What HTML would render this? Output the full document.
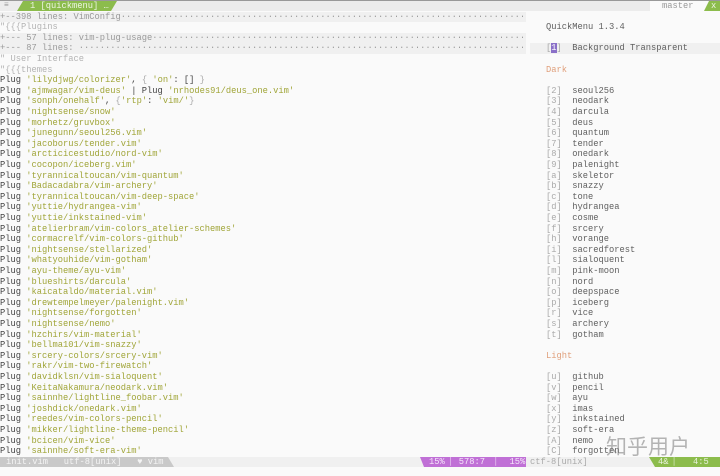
<!DOCTYPE html>
<html><head><meta charset="utf-8"><style>
*{margin:0;padding:0;box-sizing:border-box}
body{width:720px;height:476px;background:#fafafa;overflow:hidden;position:relative;font-family:"Liberation Mono",monospace;font-size:8.75px;color:#444}
.r{position:absolute;left:0;height:10.6px;line-height:10.6px;white-space:pre}
.m{margin-top:1px}
.s{color:#a0a538}.c{color:#b4b4b4}.p{color:#aaa}
.fold{background:#f0f0f0;color:#9a9a9a;width:526px;overflow:hidden}
.q{left:546px;color:#606060}
.q b{font-weight:normal;color:#aaa}
.h{color:#e0a07c}
</style></head><body>
<!-- tabline -->
<div style="position:absolute;left:0;top:0;width:720px;height:11px;background:#ececec;border-top:1px solid #999"></div>
<div style="position:absolute;left:4px;top:1px;font-size:8px;color:#999;line-height:10px">≡</div>
<div style="position:absolute;left:17px;top:1px;width:100px;height:10px;background:#8cbc4c;clip-path:polygon(6px 0,100% 0,94px 100%,0 100%)"></div>
<div class="r" style="left:30px;top:1px;color:#eef5e4">1 [quickmenu] …</div>
<div style="position:absolute;left:650px;top:1px;width:70px;height:10px;background:#fafafa"></div>
<div class="r" style="left:662px;top:1px;color:#999">master</div>
<div style="position:absolute;left:704px;top:1px;width:16px;height:10px;background:#8cbc4c;clip-path:polygon(5px 0,100% 0,100% 100%,0 100%)"></div>
<div class="r" style="left:711px;top:1px;color:#eef5e4">x</div>

<div class="m" style="position:absolute;left:0;top:0;width:720px;height:456px">
<div class="r fold" style="top:10.6px">+--398 lines: VimConfig···············································································</div>
<div class="r c" style="top:21.2px">"{{{Plugins</div>
<div class="r fold" style="top:31.8px">+--- 57 lines: vim-plug-usage········································································</div>
<div class="r fold" style="top:42.4px">+--- 87 lines: ······················································································</div>
<div class="r c" style="top:53px">" User Interface</div>
<div class="r c" style="top:63.6px">"{{{themes</div>
<div id="L"></div>
<div style="position:absolute;left:530px;top:42.4px;width:190px;height:10.6px;background:#f0f0f0"></div>
<div class="r q" style="top:21.2px">QuickMenu 1.3.4</div>
<div class="r q" style="top:42.4px"><b>[<span style="background:#8a70c8;color:#fff">1</span>]</b>  Background Transparent</div>
<div class="r q h" style="top:63.6px">Dark</div>
<div id="Q"></div>
</div>

<!-- statusline -->
<div style="position:absolute;left:0;top:457px;width:720px;height:10px;background:#f0f0f0"></div>
<div style="position:absolute;left:0;top:457px;width:174px;height:10px;background:#c9c9c9;clip-path:polygon(0 0,168px 0,174px 100%,0 100%)"></div>
<div class="r" style="left:6px;top:456.5px;color:#f4f4f4">init.vim   utf-8[unix]   ♥ vim</div>
<div style="position:absolute;left:420px;top:457px;width:106px;height:10px;background:#c070d6;clip-path:polygon(0 0,100% 0,100% 100%,4px 100%)"></div>
<div class="r" style="left:429px;top:456.5px;color:#f5e6fa">15% ⎸578:7  ⎸ 15%</div>
<div class="r" style="left:530px;top:456.5px;color:#aaa">ctf-8[unix]</div>
<div style="position:absolute;left:649px;top:457px;width:71px;height:10px;background:#8cbc4c;clip-path:polygon(0 0,100% 0,100% 100%,6px 100%)"></div>
<div class="r" style="left:658px;top:456.5px;color:#e8f2dc">4&amp; ⎸  4:5</div>
<div class="r" style="left:606px;top:433px;font-family:'Noto Sans CJK SC',sans-serif;font-size:21px;line-height:26px;height:26px;color:rgba(120,120,120,.55)">知乎用户</div>
<script>
var P=[["'lilydjwg/colorizer'",", { 'on': [] }"],["'ajmwagar/vim-deus'"," | Plug <s>'nrhodes91/deus_one.vim'</s>"],["'sonph/onehalf'",", {'rtp': 'vim/'}"],["'nightsense/snow'"],["'morhetz/gruvbox'"],["'junegunn/seoul256.vim'"],["'jacoborus/tender.vim'"],["'arcticicestudio/nord-vim'"],["'cocopon/iceberg.vim'"],["'tyrannicaltoucan/vim-quantum'"],["'Badacadabra/vim-archery'"],["'tyrannicaltoucan/vim-deep-space'"],["'yuttie/hydrangea-vim'"],["'yuttie/inkstained-vim'"],["'atelierbram/vim-colors_atelier-schemes'"],["'cormacrelf/vim-colors-github'"],["'nightsense/stellarized'"],["'whatyouhide/vim-gotham'"],["'ayu-theme/ayu-vim'"],["'blueshirts/darcula'"],["'kaicataldo/material.vim'"],["'drewtempelmeyer/palenight.vim'"],["'nightsense/forgotten'"],["'nightsense/nemo'"],["'hzchirs/vim-material'"],["'bellma101/vim-snazzy'"],["'srcery-colors/srcery-vim'"],["'rakr/vim-two-firewatch'"],["'davidklsn/vim-sialoquent'"],["'KeitaNakamura/neodark.vim'"],["'sainnhe/lightline_foobar.vim'"],["'joshdick/onedark.vim'"],["'reedes/vim-colors-pencil'"],["'mikker/lightline-theme-pencil'"],["'bcicen/vim-vice'"],["'sainnhe/soft-era-vim'"]];
var h="";P.forEach(function(p,i){var t=(p[1]||"").replace(/<s>(.*)<\/s>/,'<span class="s">$1</span>').replace(/\{ 'on'/,"<span class='p'>{</span> <span class='s'>'on'</span>").replace(/\{'rtp': 'vim\/'\}/,"<span class='p'>{</span><span class='s'>'rtp'</span>: <span class='s'>'vim/'</span><span class='p'>}</span>").replace(/\[\] \}$/,"[] <span class='p'>}</span>");h+='<div class="r" style="top:'+(10.6*(7+i)).toFixed(1)+'px">Plug <span class="s">'+p[0]+'</span>'+t+'</div>';});
document.getElementById("L").outerHTML=h;
var D="2 seoul256,3 neodark,4 darcula,5 deus,6 quantum,7 tender,8 onedark,9 palenight,a skeletor,b snazzy,c tone,d hydrangea,e cosme,f srcery,h vorange,i sacredforest,l sialoquent,m pink-moon,n nord,o deepspace,p iceberg,r vice,s archery,t gotham".split(",");
var Lt="u github,v pencil,w ayu,x imas,y inkstained,z soft-era,A nemo,C forgotten".split(",");
var q="";D.forEach(function(d,i){var a=d.split(" ");q+='<div class="r q" style="top:'+(10.6*(8+i)).toFixed(1)+'px"><b>['+a[0]+']</b>  '+a[1]+'</div>';});
q+='<div class="r q h" style="top:'+(10.6*33).toFixed(1)+'px">Light</div>';
Lt.forEach(function(d,i){var a=d.split(" ");q+='<div class="r q" style="top:'+(10.6*(35+i)).toFixed(1)+'px"><b>['+a[0]+']</b>  '+a[1]+'</div>';});
document.getElementById("Q").outerHTML=q;
</script>
</body></html>
